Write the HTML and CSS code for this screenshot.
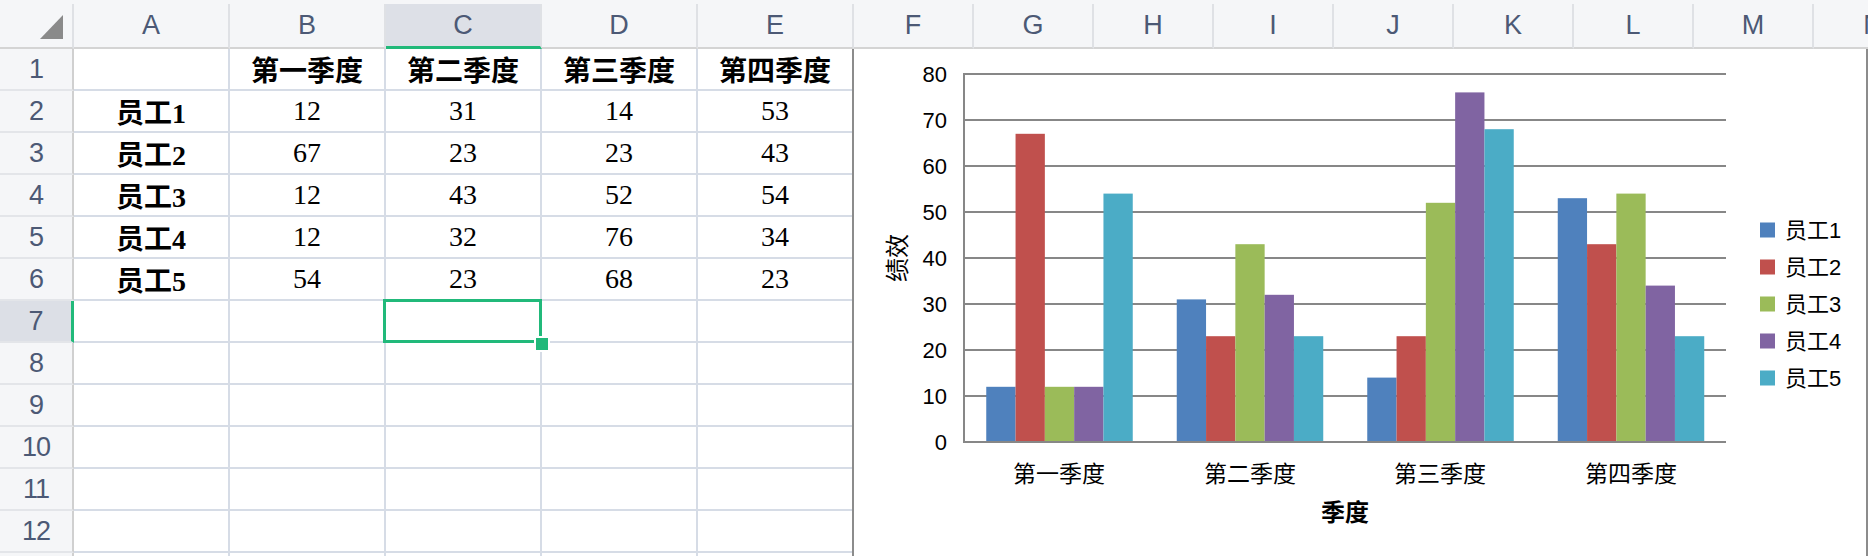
FILE: index.html
```html
<!DOCTYPE html>
<html lang="zh-CN">
<head>
  <meta charset="UTF-8" />
  <title>员工绩效</title>
  <link rel="stylesheet" href="styles.css">
</head>
<body>

<div class="sheet">
  <div class="col-heads">
    <div class="corner">
      <svg width="23" height="24" viewBox="0 0 23 24"><polygon points="0,24 23,0 23,24" fill="#8a8a8a"/></svg>
    </div>
    <div class="col-head wide">A</div>
    <div class="col-head wide">B</div>
    <div class="col-head wide active">C</div>
    <div class="col-head wide">D</div>
    <div class="col-head wide">E</div>
    <div class="col-head">F</div>
    <div class="col-head">G</div>
    <div class="col-head">H</div>
    <div class="col-head">I</div>
    <div class="col-head">J</div>
    <div class="col-head">K</div>
    <div class="col-head">L</div>
    <div class="col-head">M</div>
    <div class="col-head">N</div>
  </div>

  <div class="main">
    <div class="grid">
      <div class="row">
        <div class="row-head">1</div>
        <div class="cell"></div>
        <div class="cell bold">第一季度</div>
        <div class="cell bold">第二季度</div>
        <div class="cell bold">第三季度</div>
        <div class="cell bold last">第四季度</div>
      </div>
      <div class="row">
        <div class="row-head">2</div>
        <div class="cell bold">员工1</div>
        <div class="cell">12</div>
        <div class="cell">31</div>
        <div class="cell">14</div>
        <div class="cell last">53</div>
      </div>
      <div class="row">
        <div class="row-head">3</div>
        <div class="cell bold">员工2</div>
        <div class="cell">67</div>
        <div class="cell">23</div>
        <div class="cell">23</div>
        <div class="cell last">43</div>
      </div>
      <div class="row">
        <div class="row-head">4</div>
        <div class="cell bold">员工3</div>
        <div class="cell">12</div>
        <div class="cell">43</div>
        <div class="cell">52</div>
        <div class="cell last">54</div>
      </div>
      <div class="row">
        <div class="row-head">5</div>
        <div class="cell bold">员工4</div>
        <div class="cell">12</div>
        <div class="cell">32</div>
        <div class="cell">76</div>
        <div class="cell last">34</div>
      </div>
      <div class="row">
        <div class="row-head">6</div>
        <div class="cell bold">员工5</div>
        <div class="cell">54</div>
        <div class="cell">23</div>
        <div class="cell">68</div>
        <div class="cell last">23</div>
      </div>
      <div class="row">
        <div class="row-head active">7</div>
        <div class="cell"></div>
        <div class="cell"></div>
        <div class="cell selected">
          <div class="selection"></div>
          <div class="handle"></div>
        </div>
        <div class="cell"></div>
        <div class="cell last"></div>
      </div>
      <div class="row">
        <div class="row-head">8</div>
        <div class="cell"></div><div class="cell"></div><div class="cell"></div><div class="cell"></div><div class="cell last"></div>
      </div>
      <div class="row">
        <div class="row-head">9</div>
        <div class="cell"></div><div class="cell"></div><div class="cell"></div><div class="cell"></div><div class="cell last"></div>
      </div>
      <div class="row">
        <div class="row-head">10</div>
        <div class="cell"></div><div class="cell"></div><div class="cell"></div><div class="cell"></div><div class="cell last"></div>
      </div>
      <div class="row">
        <div class="row-head">11</div>
        <div class="cell"></div><div class="cell"></div><div class="cell"></div><div class="cell"></div><div class="cell last"></div>
      </div>
      <div class="row">
        <div class="row-head">12</div>
        <div class="cell"></div><div class="cell"></div><div class="cell"></div><div class="cell"></div><div class="cell last"></div>
      </div>
      <!-- next row only peeks in at the bottom edge -->
      <div class="row">
        <div class="row-head"></div>
        <div class="cell"></div><div class="cell"></div><div class="cell"></div><div class="cell"></div><div class="cell last"></div>
      </div>
    </div>

    <!-- chart drawn in page coordinates (viewBox starts at the chart's top-left) -->
    <div class="chart">
      <svg width="1012" height="507" viewBox="854 49 1012 507">
        <g class="gridline">
          <line x1="964" y1="74" x2="1726" y2="74"/>
          <line x1="964" y1="120" x2="1726" y2="120"/>
          <line x1="964" y1="166" x2="1726" y2="166"/>
          <line x1="964" y1="212" x2="1726" y2="212"/>
          <line x1="964" y1="258" x2="1726" y2="258"/>
          <line x1="964" y1="304" x2="1726" y2="304"/>
          <line x1="964" y1="350" x2="1726" y2="350"/>
          <line x1="964" y1="396" x2="1726" y2="396"/>
        </g>

        <g class="tick">
          <text x="947" y="82">80</text>
          <text x="947" y="128">70</text>
          <text x="947" y="174">60</text>
          <text x="947" y="220">50</text>
          <text x="947" y="266">40</text>
          <text x="947" y="312">30</text>
          <text x="947" y="358">20</text>
          <text x="947" y="404">10</text>
          <text x="947" y="450">0</text>
        </g>

        <!-- 第一季度 -->
        <rect class="s1" x="986.25" y="386.8" width="29.3" height="55.2"/>
        <rect class="s2" x="1015.55" y="133.8" width="29.3" height="308.2"/>
        <rect class="s3" x="1044.85" y="386.8" width="29.3" height="55.2"/>
        <rect class="s4" x="1074.15" y="386.8" width="29.3" height="55.2"/>
        <rect class="s5" x="1103.45" y="193.6" width="29.3" height="248.4"/>
        <!-- 第二季度 -->
        <rect class="s1" x="1176.75" y="299.4" width="29.3" height="142.6"/>
        <rect class="s2" x="1206.05" y="336.2" width="29.3" height="105.8"/>
        <rect class="s3" x="1235.35" y="244.2" width="29.3" height="197.8"/>
        <rect class="s4" x="1264.65" y="294.8" width="29.3" height="147.2"/>
        <rect class="s5" x="1293.95" y="336.2" width="29.3" height="105.8"/>
        <!-- 第三季度 -->
        <rect class="s1" x="1367.25" y="377.6" width="29.3" height="64.4"/>
        <rect class="s2" x="1396.55" y="336.2" width="29.3" height="105.8"/>
        <rect class="s3" x="1425.85" y="202.8" width="29.3" height="239.2"/>
        <rect class="s4" x="1455.15" y="92.4" width="29.3" height="349.6"/>
        <rect class="s5" x="1484.45" y="129.2" width="29.3" height="312.8"/>
        <!-- 第四季度 -->
        <rect class="s1" x="1557.75" y="198.2" width="29.3" height="243.8"/>
        <rect class="s2" x="1587.05" y="244.2" width="29.3" height="197.8"/>
        <rect class="s3" x="1616.35" y="193.6" width="29.3" height="248.4"/>
        <rect class="s4" x="1645.65" y="285.6" width="29.3" height="156.4"/>
        <rect class="s5" x="1674.95" y="336.2" width="29.3" height="105.8"/>

        <g class="gridline">
          <line x1="964" y1="73" x2="964" y2="443"/>
          <line x1="963" y1="442" x2="1726" y2="442"/>
        </g>

        <g class="cat">
          <text x="1059" y="482">第一季度</text>
          <text x="1250" y="482">第二季度</text>
          <text x="1440" y="482">第三季度</text>
          <text x="1631" y="482">第四季度</text>
        </g>
        <text class="axis-title bold" x="1345" y="521">季度</text>
        <text class="axis-title" transform="translate(897 258) rotate(-90)" dy="9">绩效</text>

        <g class="legend">
          <rect class="s1" x="1760" y="222.5" width="15" height="15"/>
          <text x="1785" y="238">员工1</text>
          <rect class="s2" x="1760" y="259.5" width="15" height="15"/>
          <text x="1785" y="275">员工2</text>
          <rect class="s3" x="1760" y="296.5" width="15" height="15"/>
          <text x="1785" y="312">员工3</text>
          <rect class="s4" x="1760" y="333.5" width="15" height="15"/>
          <text x="1785" y="349">员工4</text>
          <rect class="s5" x="1760" y="370.5" width="15" height="15"/>
          <text x="1785" y="386">员工5</text>
        </g>
      </svg>
    </div>
  </div>
</div>

</body>
</html>
```

FILE: styles.css
```css
body {
  margin: 0;
  background: #fff;
  overflow: hidden;
}
.sheet {
  width: 1868px;
  height: 556px;
  overflow: hidden;
}

/* column letters */
.col-heads {
  display: flex;
  padding-top: 4px;
  background: #f5f6f8;
}
.corner {
  width: 74px;
  height: 45px;
  flex: none;
  box-sizing: border-box;
  border-right: 2px solid #dfe1e5;
  border-bottom: 2px solid #d4d4d4;
  display: flex;
  justify-content: flex-end;
  align-items: flex-start;
  padding: 11px 9px 0 0;
}
.col-head {
  width: 120px;
  height: 45px;
  flex: none;
  box-sizing: border-box;
  border-right: 2px solid #dfe1e5;
  border-bottom: 2px solid #d4d4d4;
  display: flex;
  align-items: center;
  justify-content: center;
  font: 27px "Liberation Sans", Arial, sans-serif;
  color: #4c5975;
}
.col-head.wide {
  width: 156px;
}
.col-head.active {
  background: #dde0e7;
  border-bottom: 3px solid #21b97a;
}

/* cells */
.main {
  display: flex;
  height: 507px;
}
.grid {
  width: 852px;
  flex: none;
}
.row {
  display: flex;
  height: 42px;
}
.row-head {
  width: 74px;
  flex: none;
  box-sizing: border-box;
  border-right: 2px solid #d0d0d0;
  border-bottom: 2px solid #e3e5e9;
  background: #f5f6f8;
  display: flex;
  align-items: center;
  justify-content: center;
  font: 27px "Liberation Sans", Arial, sans-serif;
  color: #4c5975;
  letter-spacing: -1px;
}
.row-head.active {
  background: #dcdfe6;
  border-right: 3px solid #21b97a;
}
.cell {
  width: 156px;
  flex: none;
  box-sizing: border-box;
  border-right: 2px solid #d6dce6;
  border-bottom: 2px solid #d6dce6;
  display: flex;
  align-items: center;
  justify-content: center;
  font: 28px "Liberation Serif", "Noto Sans CJK SC", serif;
  color: #000;
}
.cell.last {
  width: 154px;
  border-right: none;
}
.cell.bold {
  font-weight: bold;
}
.cell.selected {
  position: relative;
}
.selection {
  position: absolute;
  top: -2px;
  left: -3px;
  right: -2px;
  bottom: -2px;
  border: 3px solid #21b97a;
  z-index: 2;
}
.handle {
  position: absolute;
  right: -10px;
  bottom: -11px;
  width: 12px;
  height: 12px;
  background: #21b97a;
  border: 2px solid #fff;
  z-index: 3;
}

/* chart */
.chart {
  flex: 1;
  background: #fff;
  border-left: 2px solid #8c8c8c;
  border-right: 2px solid #8c8c8c;
}
.chart svg {
  display: block;
}
.gridline line {
  stroke: #878787;
  stroke-width: 2;
}
.tick text {
  font: 22px "Liberation Sans", Arial, sans-serif;
  text-anchor: end;
  fill: #000;
}
.cat text {
  font: 23px "Liberation Serif", "Noto Sans CJK SC", serif;
  text-anchor: middle;
  fill: #000;
}
.axis-title {
  font: 24px "Noto Sans CJK SC", sans-serif;
  text-anchor: middle;
  fill: #000;
}
.axis-title.bold {
  font-weight: bold;
}
.legend text {
  font: 22px "Liberation Sans", "Noto Sans CJK SC", sans-serif;
  fill: #000;
}
.s1 { fill: #4f81bd; }
.s2 { fill: #c0504d; }
.s3 { fill: #9bbb59; }
.s4 { fill: #8064a2; }
.s5 { fill: #4bacc6; }
```
